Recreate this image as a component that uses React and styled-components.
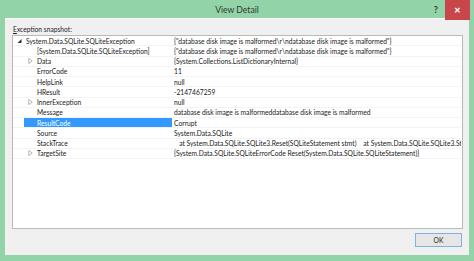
import styled, { createGlobalStyle } from 'styled-components';

const GlobalStyle = createGlobalStyle`
  html, body {
    margin: 0;
    padding: 0;
    background: #93d3a8;
  }
  * {
    box-sizing: border-box;
  }
`;

const Window = styled.div`
  width: 474px;
  height: 261px;
  background: #93d3a8;
  padding: 0 5px 6px 5px;
  display: flex;
  flex-direction: column;
  font-family: Lato, "Noto Sans", sans-serif;
  overflow: hidden;
`;

const TitleBar = styled.div`
  height: 18px;
  position: relative;
  display: flex;
  align-items: center;
  justify-content: center;
`;

const Title = styled.div`
  font-size: 8.6px;
  color: #2f3a33;
  padding-top: 2px;
`;

const Help = styled.div`
  position: absolute;
  right: 31px;
  top: 4px;
  font-size: 9px;
  color: #2f3a33;
  font-weight: 700;
`;

const CloseButton = styled.div`
  position: absolute;
  right: -1px;
  top: 0;
  width: 25px;
  height: 20px;
  background: #c8464a;
  color: #fff;
  font-size: 8px;
  font-weight: 700;
  display: flex;
  align-items: center;
  justify-content: center;
`;

const Client = styled.div`
  flex: 1;
  background: #f0f0f0;
  border-top: 1px solid #fafafa;
  padding: 4px 6px 6px 7px;
  display: flex;
  flex-direction: column;
`;

const Label = styled.div`
  font-size: 6.7px;
  color: #1e1e1e;
  height: 12px;
  line-height: 12px;
  margin-left: 1px;
  u {
    text-decoration: underline;
  }
`;

const TreeBox = styled.div`
  height: 194px;
  background: #fff;
  border: 1px solid #b9b9b9;
  overflow: hidden;
`;

const Row = styled.div`
  display: flex;
  height: 10.25px;
  align-items: center;
  font-size: 6.7px;
  color: #1a1a1a;
  width: 448px;
  border-bottom: 1px solid #f3f3f3;
`;

const Gutter = styled.div`
  width: 11px;
  flex: none;
`;

const NameCell = styled.div`
  width: 148px;
  flex: none;
  height: 100%;
  display: flex;
  align-items: center;
  padding-left: ${(p) => p.$level * 11 + 2}px;
  background: ${(p) => (p.$selected ? '#3399ff' : 'transparent')};
  color: ${(p) => (p.$selected ? '#fff' : '#1a1a1a')};
  position: relative;
  white-space: nowrap;
`;

const Expander = styled.span`
  position: absolute;
  left: ${(p) => p.$level * 11 - 7}px;
  top: 50%;
  transform: translateY(-50%);
  display: flex;
`;

const ValueCell = styled.div`
  flex: 1;
  padding-left: 2px;
  white-space: pre;
  overflow: hidden;
`;

const Footer = styled.div`
  flex: 1;
  display: flex;
  justify-content: flex-end;
  align-items: center;
  padding-top: 1px;
`;

const OkButton = styled.button`
  width: 47px;
  height: 14px;
  margin-right: 1px;
  background: #e6e6e6;
  border: 1px solid #7fb1e3;
  font-family: Lato, sans-serif;
  font-size: 6.7px;
  color: #1e1e1e;
  padding: 0;
`;

const rows = [
  { name: 'System.Data.SQLite.SQLiteException', value: '{"database disk image is malformed\\r\\ndatabase disk image is malformed"}', level: 0, exp: 'open' },
  { name: '[System.Data.SQLite.SQLiteException]', value: '{"database disk image is malformed\\r\\ndatabase disk image is malformed"}', level: 1 },
  { name: 'Data', value: '{System.Collections.ListDictionaryInternal}', level: 1, exp: 'closed' },
  { name: 'ErrorCode', value: '11', level: 1 },
  { name: 'HelpLink', value: 'null', level: 1 },
  { name: 'HResult', value: '-2147467259', level: 1 },
  { name: 'InnerException', value: 'null', level: 1, exp: 'closed' },
  { name: 'Message', value: 'database disk image is malformeddatabase disk image is malformed', level: 1 },
  { name: 'ResultCode', value: 'Corrupt', level: 1, selected: true },
  { name: 'Source', value: 'System.Data.SQLite', level: 1 },
  { name: 'StackTrace', value: '   at System.Data.SQLite.SQLite3.Reset(SQLiteStatement stmt)    at System.Data.SQLite.SQLite3.Step(SQLiteStatement stmt)', level: 1 },
  { name: 'TargetSite', value: '{System.Data.SQLite.SQLiteErrorCode Reset(System.Data.SQLite.SQLiteStatement)}', level: 1, exp: 'closed' },
];

function Arrow({ open }) {
  if (open) {
    return (
      <svg width="5" height="5" viewBox="0 0 5 5">
        <path d="M4.5 0.5 L4.5 4.5 L0.5 4.5 Z" fill="#333" />
      </svg>
    );
  }
  return (
    <svg width="5" height="7" viewBox="0 0 5 7">
      <path d="M0.8 0.8 L4.2 3.5 L0.8 6.2 Z" fill="none" stroke="#a6a6a6" strokeWidth="0.8" />
    </svg>
  );
}

export default function App() {
  return (
    <>
      <GlobalStyle />
      <Window>
        <TitleBar>
          <Title>View Detail</Title>
          <Help>?</Help>
          <CloseButton>✕</CloseButton>
        </TitleBar>
        <Client>
          <Label>
            <u>E</u>xception snapshot:
          </Label>
          <TreeBox>
            {rows.map((r) => (
              <Row key={r.name}>
                <Gutter />
                <NameCell $level={r.level} $selected={r.selected}>
                  {r.exp && (
                    <Expander $level={r.level}>
                      <Arrow open={r.exp === 'open'} />
                    </Expander>
                  )}
                  {r.name}
                </NameCell>
                <ValueCell>{r.value}</ValueCell>
              </Row>
            ))}
          </TreeBox>
          <Footer>
            <OkButton>OK</OkButton>
          </Footer>
        </Client>
      </Window>
    </>
  );
}
